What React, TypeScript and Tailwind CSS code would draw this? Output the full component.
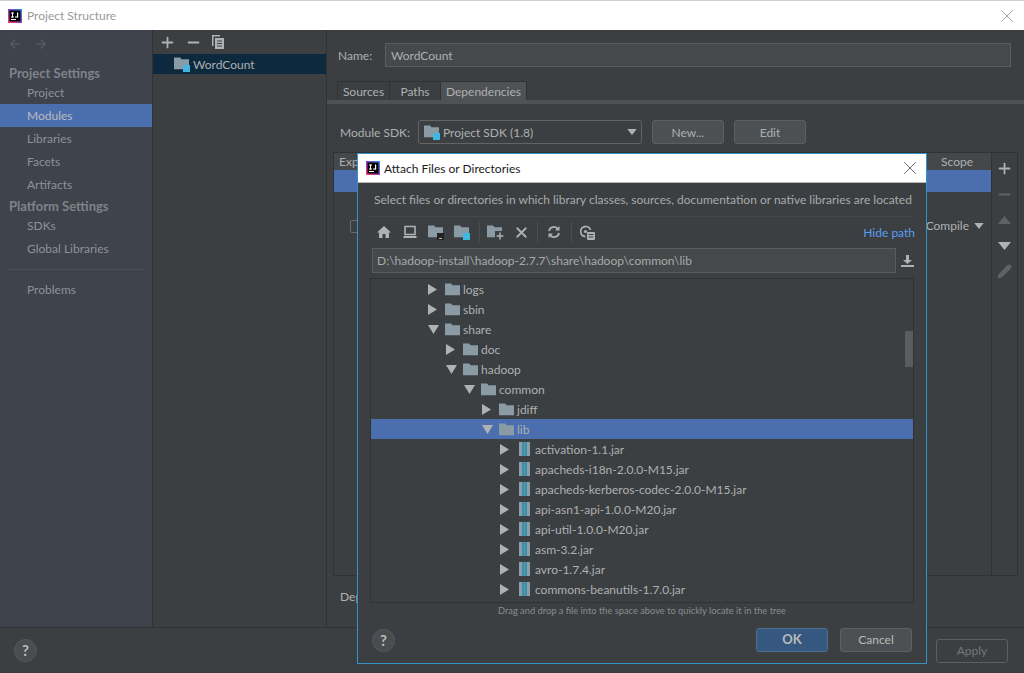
import React from "react";
import { ArrowLeft, ArrowRight, Minus, Pencil, Plus, X } from "lucide-react";

const font = "font-['Lato','Noto_Sans',sans-serif]";

const IdeaLogo = () => (
  <svg width="14" height="14" viewBox="0 0 14 14" className="shrink-0">
    <defs>
      <linearGradient id="ij" x1="0" y1="1" x2="1" y2="0">
        <stop offset="0" stopColor="#fc3a5e" />
        <stop offset="0.5" stopColor="#8a3fc0" />
        <stop offset="1" stopColor="#1e9bf0" />
      </linearGradient>
    </defs>
    <rect width="14" height="14" fill="url(#ij)" />
    <rect x="1.5" y="1.5" width="11" height="11" fill="#000" />
    <rect x="3" y="10" width="5" height="1" fill="#fff" />
    <rect x="3" y="3.5" width="3" height="1" fill="#fff" />
    <rect x="4" y="3.5" width="1" height="5" fill="#fff" />
    <rect x="3" y="7.5" width="3" height="1" fill="#fff" />
    <rect x="9" y="3.5" width="1.2" height="5" fill="#fff" />
    <rect x="7" y="7.5" width="3" height="1" fill="#fff" />
  </svg>
);

const Folder = ({ size = 15, color = "#8b9ba5" }: { size?: number; color?: string }) => (
  <svg width={size} height={size} viewBox="0 0 16 16" className="shrink-0">
    <path d="M0 1.5h6.5l1.5 2h8V14H0z" fill={color} />
  </svg>
);

const Jar = () => (
  <svg width="11" height="14" viewBox="0 0 11 14" className="shrink-0">
    <rect x="0" y="0" width="3" height="14" fill="#8e9ea8" />
    <rect x="3" y="0" width="5" height="14" fill="#3e8ea6" />
    <path d="M5.5 0v14" stroke="#5fa9bd" strokeWidth="1" strokeDasharray="1 1" />
    <rect x="8" y="0" width="3" height="14" fill="#8e9ea8" />
  </svg>
);

const Arrow = ({ open }: { open: boolean }) =>
  open ? (
    <svg width="11" height="9" viewBox="0 0 11 9" className="shrink-0">
      <path d="M0 0h11L5.5 9z" fill="#afb1b3" />
    </svg>
  ) : (
    <svg width="9" height="11" viewBox="0 0 9 11" className="shrink-0">
      <path d="M0 0l9 5.5L0 11z" fill="#afb1b3" />
    </svg>
  );

const Caret = () => (
  <svg width="10" height="6" viewBox="0 0 11 7" className="shrink-0">
    <path d="M0 0h11L5.5 7z" fill="#afb1b3" />
  </svg>
);

const FolderBadge = ({ badge, dash }: { badge: string; dash?: boolean }) => (
  <div className="relative w-[16px] h-[16px] shrink-0">
    <Folder size={15} />
    <div className={"absolute right-0 bottom-0 w-[7px] h-[7px] flex items-end justify-center pb-[1px] " + badge}>
      {dash && <div className="w-[3px] h-px bg-[#bbbbbb]"></div>}
    </div>
  </div>
);

const CopyIcon = () => (
  <svg width="14" height="14" viewBox="0 0 14 14">
    <path d="M1 0h8v1.5H2.5V11H1z" fill="#afb1b3" />
    <path d="M4 3h9v11H4z" fill="#afb1b3" />
    <path d="M6 6h5M6 8.5h5M6 11h5" stroke="#3c3f41" strokeWidth="1" />
  </svg>
);

const HomeIcon = () => (
  <svg width="14" height="14" viewBox="0 0 14 14">
    <path d="M7 1l7 6.5h-2V13H8.5V9h-3v4H2V7.5H0z" fill="#afb1b3" />
  </svg>
);

const DesktopIcon = () => (
  <svg width="14" height="14" viewBox="0 0 14 14">
    <path d="M2 1.5h10v8H2z" fill="none" stroke="#afb1b3" strokeWidth="1.6" />
    <rect x="0.5" y="11" width="13" height="2" fill="#afb1b3" />
  </svg>
);

const RefreshIcon = () => (
  <svg width="14" height="14" viewBox="0 0 14 14">
    <path d="M2 6a5 5 0 0 1 9-2" fill="none" stroke="#afb1b3" strokeWidth="1.8" />
    <path d="M12.5 1v4.5H8z" fill="#afb1b3" />
    <path d="M12 8a5 5 0 0 1-9 2" fill="none" stroke="#afb1b3" strokeWidth="1.8" />
    <path d="M1.5 13V8.5H6z" fill="#afb1b3" />
  </svg>
);

const RecentIcon = () => (
  <svg width="16" height="15" viewBox="0 0 16 15">
    <path d="M6.5 11.5A5 5 0 1 1 11.5 5" fill="none" stroke="#afb1b3" strokeWidth="1.6" />
    <circle cx="6.5" cy="6.5" r="1.6" fill="#afb1b3" />
    <rect x="8" y="7" width="8" height="8" rx="1" fill="#afb1b3" />
    <path d="M9.5 9.5h5M9.5 12h5" stroke="#3c3f41" strokeWidth="1" />
  </svg>
);

const SideItem = ({ label, active }: { label: string; active?: boolean }) => (
  <div className={"h-[23px] pl-[27px] pt-px flex items-center text-[12px] " + (active ? "bg-[#4b6eaf] text-[#bbbbbb]" : "text-[#8e9297]")}>
    {label}
  </div>
);

const SideHead = ({ label }: { label: string }) => (
  <div className="h-[18px] pl-[9px] pt-[3px] flex items-center text-[13px] font-bold text-[#7f8388]">{label}</div>
);

const rows = [
  { label: "logs", indent: 428, open: false },
  { label: "sbin", indent: 428, open: false },
  { label: "share", indent: 428, open: true },
  { label: "doc", indent: 446, open: false },
  { label: "hadoop", indent: 446, open: true },
  { label: "common", indent: 464, open: true },
  { label: "jdiff", indent: 482, open: false },
  { label: "lib", indent: 482, open: true, selected: true },
  { label: "activation-1.1.jar", indent: 500, jar: true },
  { label: "apacheds-i18n-2.0.0-M15.jar", indent: 500, jar: true },
  { label: "apacheds-kerberos-codec-2.0.0-M15.jar", indent: 500, jar: true },
  { label: "api-asn1-api-1.0.0-M20.jar", indent: 500, jar: true },
  { label: "api-util-1.0.0-M20.jar", indent: 500, jar: true },
  { label: "asm-3.2.jar", indent: 500, jar: true },
  { label: "avro-1.7.4.jar", indent: 500, jar: true },
  { label: "commons-beanutils-1.7.0.jar", indent: 500, jar: true },
];

const TreeRow = ({ row }: { row: (typeof rows)[number] }) => (
  <div
    className={"h-[20px] flex items-center text-[12px] text-[#aeb0b2] " + (row.selected ? "bg-[#4b6eaf]" : "")}
    style={{ paddingLeft: row.indent - 371 }}
  >
    <div className={(row.jar ? "w-[19px]" : "w-[17px]") + " flex items-center"}>
      <Arrow open={!!row.open} />
    </div>
    {row.jar ? <Jar /> : <Folder />}
    <span className={"pt-px " + (row.jar ? "ml-[5px]" : "ml-[3px]")}>{row.label}</span>
  </div>
);

const Cell = ({ children }: { children: React.ReactNode }) => (
  <div className="w-[26px] flex items-center justify-center shrink-0">{children}</div>
);

const Dialog = () => (
  <div className="absolute left-[357px] top-[153px] w-[570px] h-[511px] border border-[#3592c4] bg-[#3c3f41] flex flex-col">
    <div className="h-[29px] bg-white flex items-center pl-[8px] pr-[5px] shrink-0 border-b border-[#b8b8b8]">
      <IdeaLogo />
      <span className="ml-[4px] pt-px text-[12px] text-[#1a1a1a]">Attach Files or Directories</span>
      <X size={22} strokeWidth={0.8} className="ml-auto text-[#333]" />
    </div>
    <div className="h-[33px] flex items-center pl-[16px] text-[12px] text-[#a8aaac] shrink-0 whitespace-nowrap">
      Select files or directories in which library classes, sources, documentation or native libraries are located
    </div>
    <div className="mx-[12px] h-px bg-[#45484a] shrink-0"></div>
    <div className="h-[30px] flex items-center pl-[13px] pr-[11px] shrink-0">
      <Cell><HomeIcon /></Cell>
      <Cell><DesktopIcon /></Cell>
      <Cell><FolderBadge badge="bg-[#222222]" dash /></Cell>
      <Cell><FolderBadge badge="bg-[#40b6e0]" /></Cell>
      <div className="w-px h-[20px] bg-[#4b4e50] ml-[4px] mr-[2px]"></div>
      <Cell>
        <div className="relative w-[16px] h-[16px]">
          <Folder size={15} />
          <div className="absolute right-[-2px] bottom-[-1px] w-[10px] h-[10px] bg-[#3c3f41] flex items-center justify-center">
            <Plus size={10} strokeWidth={3.5} className="text-[#afb1b3]" />
          </div>
        </div>
      </Cell>
      <Cell><X size={17} strokeWidth={2.5} className="text-[#afb1b3]" /></Cell>
      <div className="w-px h-[20px] bg-[#4b4e50] ml-[3px] mr-[3px]"></div>
      <Cell><RefreshIcon /></Cell>
      <div className="w-px h-[20px] bg-[#4b4e50] ml-[4px] mr-[2px]"></div>
      <Cell><RecentIcon /></Cell>
      <span className="ml-auto pt-px text-[12px] text-[#589df6]">Hide path</span>
    </div>
    <div className="h-[25px] mt-[1px] flex items-center pl-[14px] pr-[12px] shrink-0">
      <div className="w-[524px] h-[25px] border border-[#5a5d5f] bg-[#45494a] flex items-center pl-[4px] pt-px text-[12px] text-[#a8aaac]">
        D:\hadoop-install\hadoop-2.7.7\share\hadoop\common\lib
      </div>
      <svg width="13" height="13" viewBox="0 0 13 13" className="ml-[5px]">
        <path d="M5 1h3v5h3L6.5 10 2 6h3zM0 11h13v2H0z" fill="#afb1b3" />
      </svg>
    </div>
    <div className="mx-[12px] mt-[5px] h-[325px] border border-[#323232] overflow-hidden relative shrink-0">
      {rows.map((r) => (
        <TreeRow key={r.label} row={r} />
      ))}
      <div className="absolute right-0 top-[52px] w-[8px] h-[36px] bg-[#5a5d5f]"></div>
    </div>
    <div className="h-[16px] flex items-center justify-center text-[9.3px] text-[#8a8c8e]">
      Drag and drop a file into the space above to quickly locate it in the tree
    </div>
    <div className="flex items-center pl-[14px] pr-[14px] mt-[9px]">
      <div className="w-[23px] h-[23px] rounded-full bg-[#4a4d4f] border border-[#55585a] flex items-center justify-center text-[15px] font-bold text-[#bbbbbb]">?</div>
      <button className="ml-auto w-[72px] h-[24px] rounded-[3px] border border-[#4c708c] bg-[#365880] text-[13px] font-bold text-[#bbbbbb]">OK</button>
      <button className="ml-[12px] w-[72px] h-[24px] rounded-[3px] border border-[#5e6060] bg-[#4c5052] text-[12px] text-[#bbbbbb]">Cancel</button>
    </div>
  </div>
);

export default function App() {
  return (
    <div className={"relative w-[1024px] h-[673px] overflow-hidden flex flex-col bg-[#3c3f41] " + font}>
      <div className="h-[30px] shrink-0 bg-white border-t border-[#cfcfcf] flex items-center pl-[8px] pr-[6px]">
        <IdeaLogo />
        <span className="ml-[5px] text-[12px] text-[#9a9a9a]">Project Structure</span>
        <X size={22} strokeWidth={0.8} className="ml-auto text-[#8a8a8a]" />
      </div>
      <div className="flex-1 flex min-h-0">
        <div className="w-[153px] shrink-0 bg-[#3e434c] border-r border-[#323232] flex flex-col">
          <div className="h-[28px] flex items-center pl-[8px] gap-[12px] text-[#5e6265]">
            <ArrowLeft size={14} />
            <ArrowRight size={14} />
          </div>
          <div className="h-[5px]"></div>
          <SideHead label="Project Settings" />
          <SideItem label="Project" />
          <SideItem active label="Modules" />
          <SideItem label="Libraries" />
          <SideItem label="Facets" />
          <SideItem label="Artifacts" />
          <SideHead label="Platform Settings" />
          <SideItem label="SDKs" />
          <SideItem label="Global Libraries" />
          <div className="mx-[8px] mt-[9px] mb-[8px] h-px bg-[#4a4e55]"></div>
          <SideItem label="Problems" />
        </div>
        <div className="w-[174px] shrink-0 border-r border-[#323232] flex flex-col">
          <div className="h-[24px] flex items-center pl-[6px] gap-[9px] text-[#afb1b3]">
            <Plus size={17} strokeWidth={2.5} />
            <Minus size={17} strokeWidth={2.5} />
            <CopyIcon />
          </div>
          <div className="h-[20px] bg-[#0d293e] flex items-center pl-[21px] text-[12px] text-[#aeb0b2]">
            <FolderBadge badge="bg-[#40b6e0]" />
            <span className="ml-[3px] pt-[2px]">WordCount</span>
          </div>
        </div>
        <div className="flex-1 min-w-0 flex flex-col">
          <div className="flex items-center h-[24px] mt-[13px] pl-[11px] text-[12px] text-[#aeb0b2]">
            <span className="w-[47px] pt-px">Name:</span>
            <div className="w-[626px] h-[24px] border border-[#5a5d5f] bg-[#45494a] flex items-center pl-[5px] pt-px">WordCount</div>
          </div>
          <div className="flex mt-[14px] ml-[10px] h-[19px] text-[12px] text-[#aeb0b2]">
            <div className="w-[53px] pt-px flex items-center justify-center border border-b-0 border-[#323232]">Sources</div>
            <div className="w-[51px] pt-px flex items-center justify-center border-r border-t border-[#323232]">Paths</div>
            <div className="w-[86px] pt-px flex items-center justify-center bg-[#4e5254] border-t border-r border-[#323232]">Dependencies</div>
          </div>
          <div className="h-[4px] bg-[#4e5254]"></div>
          <div className="flex items-center mt-[16px] pl-[13px] h-[24px] text-[12px] text-[#aeb0b2]">
            <span className="w-[78px] pt-px">Module SDK:</span>
            <div className="w-[224px] h-[24px] border border-[#646464] rounded-[3px] bg-[#3c3f41] flex items-center pl-[5px] pr-[4px]">
              <FolderBadge badge="bg-[#40b6e0]" />
              <span className="ml-[3px] pt-px">Project SDK (1.8)</span>
              <div className="ml-auto"><Caret /></div>
            </div>
            <button className="ml-[10px] w-[72px] h-[24px] pt-px rounded-[3px] border border-[#5e6060] bg-[#4c5052]">New...</button>
            <button className="ml-[10px] w-[72px] h-[24px] pt-px rounded-[3px] border border-[#5e6060] bg-[#4c5052]">Edit</button>
          </div>
          <div className="mt-[8px] ml-[6px] mr-[6px] h-[424px] border border-[#323232] flex">
            <div className="flex-1 flex flex-col min-w-0">
              <div className="h-[17px] bg-[#45484a] flex items-center justify-between pl-[5px] pr-[18px] text-[12px] text-[#aeb0b2]">
                <span>Exp</span>
                <span>Scope</span>
              </div>
              <div className="h-[22px] bg-[#4b6eaf]"></div>
              <div className="flex items-center justify-between mt-[24px] h-[20px] pl-[16px] pr-[7px] text-[12px] text-[#aeb0b2]">
                <div className="w-[13px] h-[13px] border border-[#6b6b6b] rounded-[2px]"></div>
                <div className="flex items-center gap-[5px]">Compile <Caret /></div>
              </div>
            </div>
            <div className="w-[26px] border-l border-[#323232] flex flex-col items-center pt-[2px]">
              <div className="h-[26px] flex items-center"><Plus size={17} strokeWidth={2.5} className="text-[#afb1b3]" /></div>
              <div className="h-[26px] flex items-center"><Minus size={17} strokeWidth={2.5} className="text-[#5e6265]" /></div>
              <div className="h-[26px] flex items-center"><svg width="13" height="8" viewBox="0 0 13 8"><path d="M6.5 0L13 8H0z" fill="#5e6265" /></svg></div>
              <div className="h-[25px] flex items-center"><svg width="13" height="8" viewBox="0 0 13 8"><path d="M0 0h13L6.5 8z" fill="#afb1b3" /></svg></div>
              <div className="h-[26px] flex items-center"><Pencil size={15} fill="#5e6265" className="text-[#5e6265]" /></div>
            </div>
          </div>
          <div className="pl-[13px] mt-[11px] h-[20px] flex items-center text-[12px] text-[#aeb0b2]">Dep</div>
        </div>
      </div>
      <div className="h-[46px] shrink-0 border-t border-[#323232] flex items-center pl-[14px] pr-[16px]">
        <div className="w-[23px] h-[23px] rounded-full bg-[#4a4d4f] border border-[#55585a] flex items-center justify-center text-[15px] font-bold text-[#bbbbbb]">?</div>
        <button className="ml-auto w-[72px] h-[24px] rounded-[3px] border border-[#5e6060] text-[12px] text-[#777777]">Apply</button>
      </div>
      <Dialog />
    </div>
  );
}
